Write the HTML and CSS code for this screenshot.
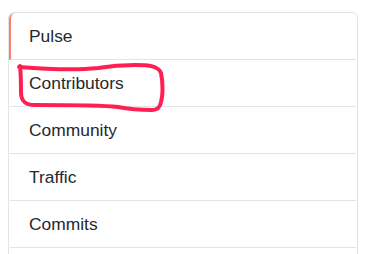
FILE: index.html
```html
<!DOCTYPE html>
<html>
<head>
<meta charset="utf-8">
<link rel="stylesheet" href="styles.css">
</head>
<body>
<nav class="menu">
  <a class="menu-item selected">Pulse</a>
  <a class="menu-item">Contributors</a>
  <a class="menu-item">Community</a>
  <a class="menu-item">Traffic</a>
  <a class="menu-item">Commits</a>
  <svg class="annotation" width="385" height="254" viewBox="0 0 385 254">
    <path d="M19 67 C 45 69, 80 70, 98 68 C 110 66, 120 65, 135 65 C 150 65, 158 66, 161 73 C 163 82, 163 95, 161 102 C 160 108, 157 110, 152 110 C 140 110, 128 109, 118 107 C 100 105, 60 105, 35 105 C 24 105, 21 100, 21 92 C 21 84, 21 74, 20 66" fill="none" stroke="#ff1f55" stroke-width="4" stroke-linecap="round" stroke-linejoin="round"/>
  </svg>
</nav>
</body>
</html>
```
FILE: styles.css
```css
html, body {
  margin: 0;
  padding: 0;
  background: #ffffff;
}
body {
  padding: 12px 0 0 8px;
  font-family: "Liberation Sans", Arial, sans-serif;
  overflow: hidden;
  height: 254px;
  box-sizing: border-box;
}
.menu {
  width: 350px;
  box-sizing: border-box;
  border: 1px solid #e1e4e8;
  border-radius: 6px;
  display: flex;
  flex-direction: column;
  padding-bottom: 20px;
  background: #fff;
}
.menu-item {
  display: block;
  padding: 11px 18px;
  line-height: 24px;
  font-size: 17.4px;
  color: #24292e;
  border-left: 2px solid transparent;
  border-bottom: 1px solid #e1e4e8;
  margin-right: 1px;
}
.menu-item.selected {
  border-left-color: #f9826c;
  border-top-left-radius: 6px;
}
.annotation {
  position: absolute;
  left: 0;
  top: 0;
  pointer-events: none;
}
```
